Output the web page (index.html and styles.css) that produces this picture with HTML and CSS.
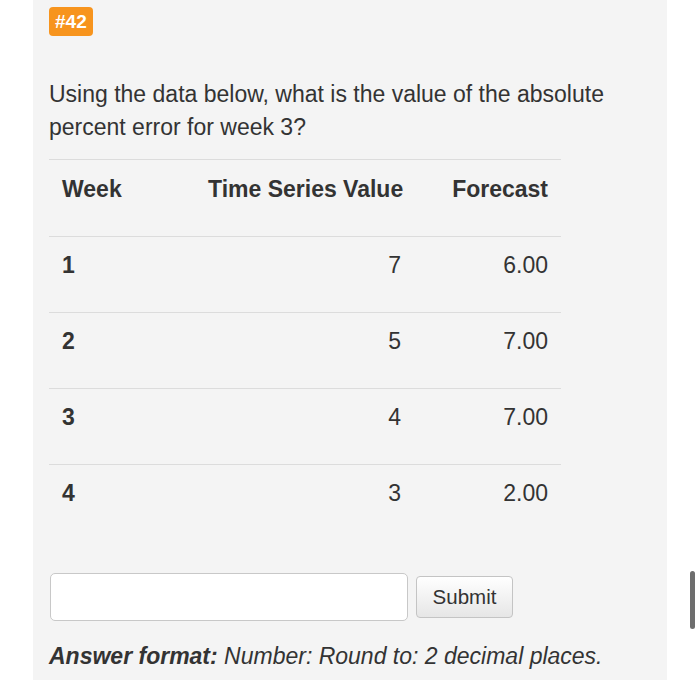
FILE: index.html
```html
<!DOCTYPE html>
<html>
<head>
<meta charset="utf-8">
<link rel="stylesheet" href="styles.css">
</head>
<body>
<div class="panel">
  <div class="badge">#42</div>
  <p class="question">Using the data below, what is the value of the absolute percent error for week 3?</p>
  <table class="data">
    <thead>
      <tr><th class="c1">Week</th><th class="c2">Time Series Value</th><th class="c3">Forecast</th></tr>
    </thead>
    <tbody>
      <tr><td class="c1 wk">1</td><td class="c2">7</td><td class="c3">6.00</td></tr>
      <tr><td class="c1 wk">2</td><td class="c2">5</td><td class="c3">7.00</td></tr>
      <tr><td class="c1 wk">3</td><td class="c2">4</td><td class="c3">7.00</td></tr>
      <tr><td class="c1 wk">4</td><td class="c2">3</td><td class="c3">2.00</td></tr>
    </tbody>
  </table>
  <div class="answer-row">
    <input class="answer" type="text">
    <button class="submit">Submit</button>
  </div>
  <p class="format"><b>Answer format:</b> Number: Round to: 2 decimal places.</p>
</div>
<div class="scrollbar"></div>
</body>
</html>
```
FILE: styles.css
```css
html, body {
  margin: 0;
  padding: 0;
  background: #ffffff;
}
body {
  font-family: "Liberation Sans", Arial, Helvetica, sans-serif;
  color: #333333;
  height: 682px;
  overflow: hidden;
  position: relative;
}
.panel {
  margin-left: 33px;
  width: 634px;
  height: 680px;
  box-sizing: border-box;
  padding: 7px 0 0 16px;
  background: #f4f4f4;
}
.badge {
  display: inline-block;
  background: #f7941d;
  color: #ffffff;
  font-weight: bold;
  font-size: 19px;
  line-height: 29px;
  height: 29px;
  padding: 0 6px;
  border-radius: 4px;
}
.question {
  margin: 42px 0 0 0;
  width: 600px;
  font-size: 23px;
  line-height: 33px;
}
.data {
  margin-top: 15px;
  border-collapse: collapse;
  width: 512px;
  font-size: 23px;
  table-layout: fixed;
}
.data th, .data td {
  border-top: 1px solid #dcdcdc;
  line-height: 24px;
  vertical-align: top;
  white-space: nowrap;
  padding: 16px 13px 35px 13px;
}
.data th {
  padding-top: 17px;
  font-weight: bold;
}
.data .c1 { width: 120px; text-align: left; }
.data .c2 { width: 193px; text-align: right; }
.data .c3 { width: 121px; text-align: right; }
.data td.wk { font-weight: bold; }
.answer-row {
  display: flex;
  align-items: center;
  gap: 8px;
  margin-top: 33px;
  margin-left: 1px;
}
.answer {
  width: 358px;
  height: 48px;
  box-sizing: border-box;
  border: 1px solid #c8c8c8;
  border-radius: 5px;
  background: #ffffff;
  margin: 0;
}
.submit {
  width: 97px;
  height: 42px;
  box-sizing: border-box;
  border: 1px solid #c4c4c4;
  border-radius: 4px;
  background: linear-gradient(#ffffff, #e6e6e6);
  font-family: "Liberation Sans", Arial, sans-serif;
  font-size: 20.5px;
  color: #333333;
  margin: 0;
  padding: 0;
}
.format {
  margin: 20px 0 0 0;
  font-size: 23px;
  font-style: italic;
  line-height: 30px;
}
.scrollbar {
  position: absolute;
  left: 690px;
  top: 571px;
  width: 5px;
  height: 58px;
  border-radius: 3px;
  background: #6e6e6e;
}
```
